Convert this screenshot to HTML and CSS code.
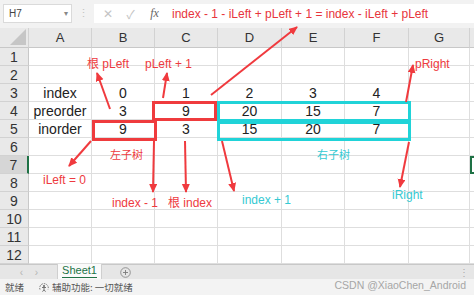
FILE: index.html
```html
<!DOCTYPE html>
<html>
<head>
<meta charset="utf-8">
<link rel="stylesheet" href="styles.css">
</head>
<body>
<div class="app">
  <div class="formula-bar">
    <div class="namebox"><span>H7</span><span class="caret">▾</span></div>
    <div class="grip">⋮</div>
    <div class="fx-box">
      <span class="fx-btn">✕</span>
      <span class="fx-btn">✓</span>
      <span class="fx-btn fx">fx</span>
      <span class="fx-text">index - 1 - iLeft + pLeft + 1 = index - iLeft + pLeft</span>
    </div>
  </div>

  <div class="grid">
    <div class="h corner"><span class="tri"></span></div><div class="h">A</div><div class="h">B</div><div class="h">C</div><div class="h">D</div><div class="h">E</div><div class="h">F</div><div class="h">G</div><div class="h"></div>

    <div class="r">1</div><div class="c"></div><div class="c"></div><div class="c"></div><div class="c"></div><div class="c"></div><div class="c"></div><div class="c"></div><div class="c"></div>
    <div class="r">2</div><div class="c"></div><div class="c"></div><div class="c"></div><div class="c"></div><div class="c"></div><div class="c"></div><div class="c"></div><div class="c"></div>
    <div class="r">3</div><div class="c">index</div><div class="c">0</div><div class="c">1</div><div class="c">2</div><div class="c">3</div><div class="c">4</div><div class="c"></div><div class="c"></div>
    <div class="r">4</div><div class="c">preorder</div><div class="c">3</div><div class="c">9</div><div class="c">20</div><div class="c">15</div><div class="c">7</div><div class="c"></div><div class="c"></div>
    <div class="r">5</div><div class="c">inorder</div><div class="c">9</div><div class="c">3</div><div class="c">15</div><div class="c">20</div><div class="c">7</div><div class="c"></div><div class="c"></div>
    <div class="r">6</div><div class="c"></div><div class="c"></div><div class="c"></div><div class="c"></div><div class="c"></div><div class="c"></div><div class="c"></div><div class="c"></div>
    <div class="r active">7</div><div class="c"></div><div class="c"></div><div class="c"></div><div class="c"></div><div class="c"></div><div class="c"></div><div class="c"></div><div class="c sel"></div>
    <div class="r">8</div><div class="c"></div><div class="c"></div><div class="c"></div><div class="c"></div><div class="c"></div><div class="c"></div><div class="c"></div><div class="c"></div>
    <div class="r">9</div><div class="c"></div><div class="c"></div><div class="c"></div><div class="c"></div><div class="c"></div><div class="c"></div><div class="c"></div><div class="c"></div>
    <div class="r">10</div><div class="c"></div><div class="c"></div><div class="c"></div><div class="c"></div><div class="c"></div><div class="c"></div><div class="c"></div><div class="c"></div>
    <div class="r">11</div><div class="c"></div><div class="c"></div><div class="c"></div><div class="c"></div><div class="c"></div><div class="c"></div><div class="c"></div><div class="c"></div>
    <div class="r">12</div><div class="c"></div><div class="c"></div><div class="c"></div><div class="c"></div><div class="c"></div><div class="c"></div><div class="c"></div><div class="c"></div>
  </div>

  <div class="tabs">
    <span class="nav">‹</span><span class="nav">›</span>
    <span class="tab"><span class="tab-label">Sheet1</span></span>
    <span class="add">
      <svg width="11" height="11" viewBox="0 0 11 11"><circle cx="5.5" cy="5.5" r="4.8" fill="none" stroke="#8a8a8a" stroke-width="0.9"/><path d="M5.5 3v5M3 5.5h5" stroke="#7a7a7a" stroke-width="0.9"/></svg>
    </span>
    <span class="tabs-grip">⋮</span>
  </div>

  <div class="status">
    <span class="ready">就绪</span>
    <span class="acc-icon">
      <svg width="12" height="11" viewBox="0 0 12 11"><path d="M2 7.5a4.3 4.3 0 1 1 8 0" fill="none" stroke="#666" stroke-width="0.9" stroke-dasharray="1.6 1.1"/><circle cx="6" cy="4" r="1" fill="#666"/><path d="M4 5.5h4M6 5.5v2.2l-1.5 2M6 7.7l1.5 2" fill="none" stroke="#666" stroke-width="0.9"/></svg>
    </span>
    <span class="acc-text">辅助功能: 一切就绪</span>
    <span class="watermark">CSDN @XiaoChen_Android</span>
  </div>

  <svg class="overlay" width="474" height="295" viewBox="0 0 474 295">
    <defs>
      <marker id="ah" markerUnits="userSpaceOnUse" markerWidth="10" markerHeight="10" refX="8" refY="4" orient="auto">
        <path d="M0 0 L9 4 L0 8 Z" fill="#f03a3e"/>
      </marker>
    </defs>
    <rect x="153.5" y="102.5" width="62" height="17" class="box-red"/>
    <rect x="93.5" y="121.5" width="62" height="18" class="box-red"/>
    <rect x="218.5" y="102.5" width="191" height="18" class="box-cyan"/>
    <rect x="218.5" y="122.5" width="191" height="17" class="box-cyan"/>

    <line x1="110" y1="109" x2="97" y2="73" class="arr"/>
    <line x1="163" y1="98" x2="167" y2="73" class="arr"/>
    <line x1="211" y1="95" x2="297" y2="27" class="arr"/>
    <line x1="406" y1="102" x2="413" y2="65" class="arr"/>
    <line x1="91" y1="141" x2="69" y2="166" class="arr"/>
    <line x1="154" y1="141" x2="153" y2="192" class="arr"/>
    <line x1="185" y1="141" x2="186" y2="192" class="arr"/>
    <line x1="222" y1="141" x2="234" y2="191" class="arr"/>
    <line x1="409" y1="142" x2="400" y2="187" class="arr"/>

    <text x="87" y="68" class="lbl red">根 pLeft</text>
    <text x="145" y="68" class="lbl red">pLeft + 1</text>
    <text x="415" y="68" class="lbl red">pRight</text>
    <text x="110" y="159" class="lbl red cjk">左子树</text>
    <text x="43" y="184" class="lbl red">iLeft = 0</text>
    <text x="112" y="207" class="lbl red">index - 1</text>
    <text x="168" y="207" class="lbl red">根 index</text>
    <text x="317" y="159" class="lbl cyan cjk">右子树</text>
    <text x="242" y="204" class="lbl cyan">index + 1</text>
    <text x="392" y="199" class="lbl cyan">iRight</text>
  </svg>
</div>
</body>
</html>
```

FILE: styles.css
```css
* {
  box-sizing: border-box;
  margin: 0;
  padding: 0;
}

body {
  margin: 0;
  width: 474px;
  height: 295px;
  overflow: hidden;
  background: #fff;
  font-family: "Liberation Sans", Arial, "Noto Sans CJK SC", sans-serif;
}

.app {
  position: relative;
  width: 474px;
  height: 295px;
  display: flex;
  flex-direction: column;
  overflow: hidden;
}

/* formula bar */
.formula-bar {
  height: 28px;
  flex: none;
  background: #f2f2f2;
  display: flex;
  align-items: flex-start;
  padding: 4px 0 0 3px;
}

.namebox {
  width: 69px;
  height: 19px;
  background: #fff;
  border: 1px solid #dadada;
  display: flex;
  align-items: center;
  justify-content: space-between;
  padding: 0 3px 0 5px;
  font-size: 10px;
  color: #444;
}

.caret {
  font-size: 8px;
  color: #888;
}

.grip {
  width: 22px;
  height: 19px;
  line-height: 19px;
  text-align: center;
  color: #c2c2c2;
  font-size: 11px;
}

.fx-box {
  flex: 1;
  height: 19px;
  background: #fff;
  display: flex;
  align-items: center;
  padding-left: 2px;
}

.fx-btn {
  width: 23px;
  text-align: center;
  color: #c4c4c4;
  font-size: 12px;
}

.fx-btn.fx {
  width: 25px;
  color: #666;
  font-family: "Liberation Serif", serif;
  font-style: italic;
  font-size: 12px;
}

.fx-text {
  padding-left: 5px;
  color: #e8343c;
  font-size: 12px;
  white-space: nowrap;
}

/* grid */
.grid {
  flex: none;
  display: grid;
  grid-template-columns: 29px 63px 63px 63px 64px 63px 64px 61px 40px;
  grid-template-rows: 20px repeat(12, 18px);
  width: 474px;
  height: 236px;
  overflow: hidden;
}

.h {
  background: #e9e9e9;
  border-right: 1px solid #d2d2d2;
  border-bottom: 1px solid #c8c8c8;
  color: #333;
  font-size: 13px;
  display: flex;
  align-items: center;
  justify-content: center;
}

.corner {
  position: relative;
}

.tri {
  position: absolute;
  right: 2px;
  bottom: 2px;
  width: 16px;
  height: 16px;
  background: #c6c6c6;
  clip-path: polygon(100% 0, 100% 100%, 0 100%);
}

.r {
  background: #e9e9e9;
  border-right: 1px solid #c8c8c8;
  border-bottom: 1px solid #d2d2d2;
  color: #333;
  font-size: 14px;
  display: flex;
  align-items: center;
  justify-content: center;
}

.r.active {
  background: #d6d6d6;
  border-right: 2px solid #1e7145;
}

.c {
  border-right: 1px solid #dedede;
  border-bottom: 1px solid #dedede;
  color: #222;
  font-size: 14px;
  display: flex;
  align-items: center;
  justify-content: center;
  white-space: nowrap;
}

.c.sel {
  border: 2px solid #1e7145;
}

/* sheet tabs */
.tabs {
  height: 15px;
  flex: none;
  background: #e6e6e6;
  border-top: 1px solid #c8c8c8;
  display: flex;
  align-items: center;
  padding-left: 14px;
  font-size: 11px;
}

.nav {
  width: 15px;
  text-align: center;
  color: #b4b4b4;
  font-size: 10px;
}

.tab {
  margin-left: 13px;
  width: 45px;
  height: 15px;
  margin-top: -1px;
  background: #fafafa;
  border-left: 1px solid #cfcfcf;
  border-right: 1px solid #cfcfcf;
  display: flex;
  justify-content: center;
  align-items: flex-start;
}

.tab-label {
  color: #217346;
  font-size: 11px;
  line-height: 13px;
  border-bottom: 1px solid #217346;
}

.add {
  margin-left: 18px;
  display: flex;
  align-items: center;
}

.tabs-grip {
  margin-left: auto;
  margin-right: 5px;
  color: #aaa;
  font-size: 10px;
}

/* status bar */
.status {
  height: 16px;
  flex: none;
  background: #f3f3f3;
  display: flex;
  align-items: center;
  padding-left: 5px;
  font-family: "Noto Sans CJK SC", sans-serif;
  font-size: 9.5px;
  color: #555;
}

.acc-icon {
  margin-left: 14px;
  display: flex;
  align-items: center;
}

.acc-text {
  margin-left: 2px;
}

.watermark {
  margin-left: auto;
  margin-right: 8px;
  margin-top: -4px;
  font-family: "Liberation Sans", Arial, sans-serif;
  font-size: 10.5px;
  color: #a6a6a6;
}

/* annotation overlay */
.overlay {
  position: absolute;
  left: 0;
  top: 0;
  pointer-events: none;
}

.box-red {
  fill: none;
  stroke: #ef3b3d;
  stroke-width: 3;
}

.box-cyan {
  fill: none;
  stroke: #20d3d8;
  stroke-width: 3;
}

.arr {
  stroke: #f03a3e;
  stroke-width: 2;
  marker-end: url(#ah);
}

.lbl {
  font-family: "Liberation Sans", Arial, "Noto Sans CJK SC", sans-serif;
  font-size: 12px;
}

.lbl.cjk {
  font-size: 11px;
}

.red {
  fill: #ee3a40;
}

.cyan {
  fill: #35c9d2;
}
```
